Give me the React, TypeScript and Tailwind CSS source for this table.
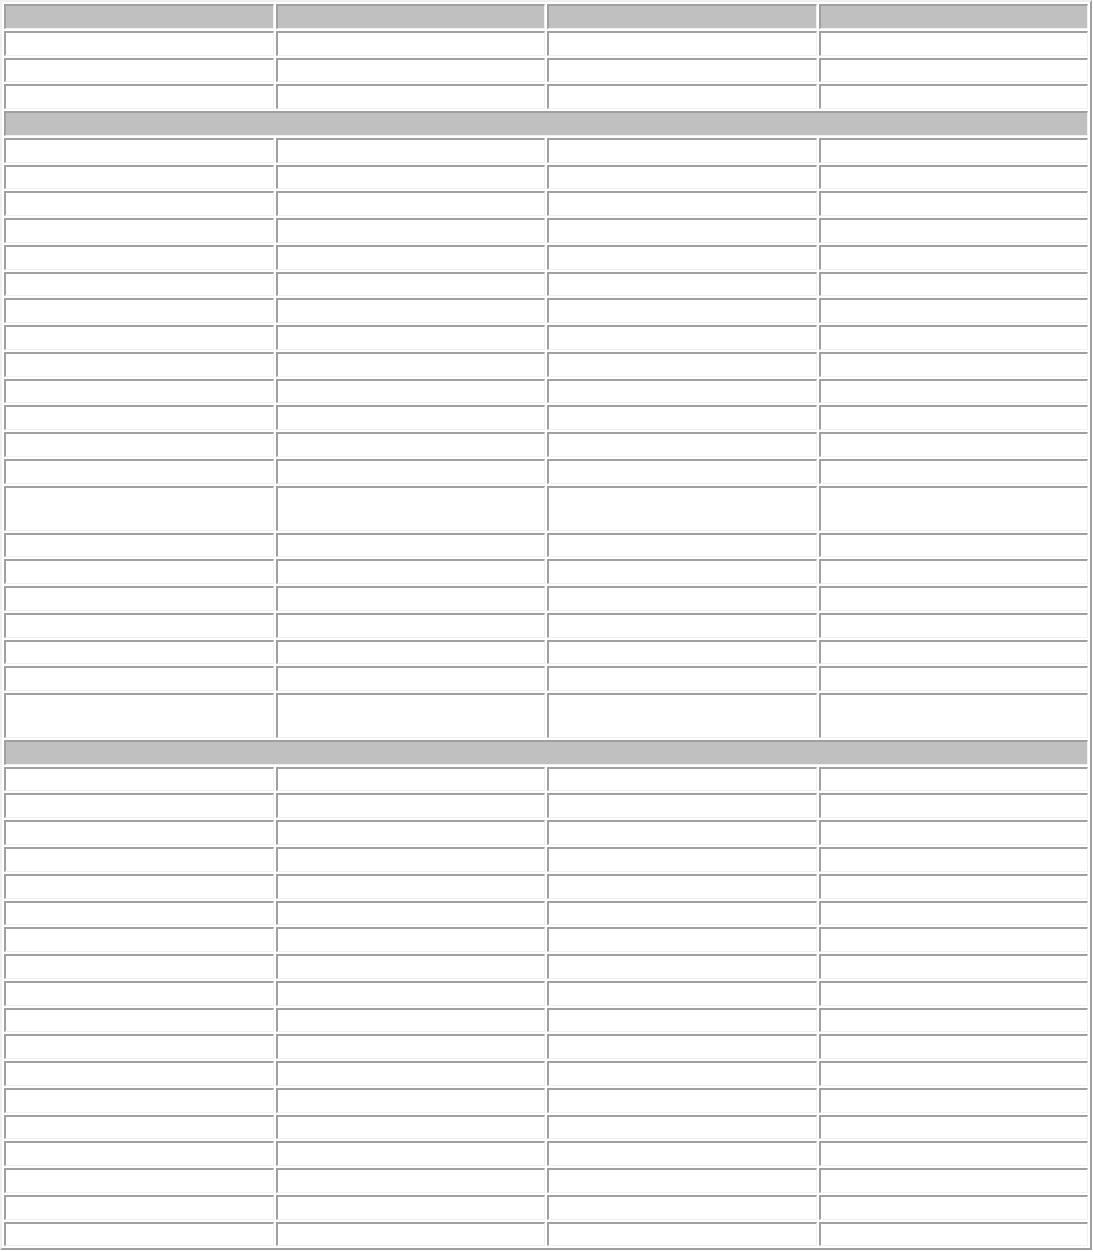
import React from "react";

type Row = { kind: "head" | "section" | "row" | "tall" };

const rows: Row[] = [
  { kind: "head" },
  ...Array.from({ length: 3 }, () => ({ kind: "row" as const })),
  { kind: "section" },
  ...Array.from({ length: 13 }, () => ({ kind: "row" as const })),
  { kind: "tall" },
  ...Array.from({ length: 6 }, () => ({ kind: "row" as const })),
  { kind: "tall" },
  { kind: "section" },
  ...Array.from({ length: 18 }, () => ({ kind: "row" as const })),
];

const cell =
  "p-0 border-t-2 border-l-2 border-b border-r border-t-[#a0a0a0] border-l-[#a0a0a0] border-b-[#f0f0f0] border-r-[#f0f0f0]";

export default function App() {
  return (
    <div className="bg-white w-[1093px] h-[1252px] font-['Liberation_Serif',serif]">
      <table className="w-[1092px] table-fixed border-separate border-spacing-[2px] border-2 border-t-[#f0f0f0] border-l-[#f0f0f0] border-b-[#a0a0a0] border-r-[#a0a0a0]">
        <tbody>
          {rows.map((r, i) => {
            if (r.kind === "section") {
              return (
                <tr key={i} className="h-[24.78px]">
                  <td colSpan={4} className={`${cell} bg-[#c0c0c0]`} />
                </tr>
              );
            }
            const bg = r.kind === "head" ? "bg-[#c0c0c0]" : "bg-white";
            const h = r.kind === "tall" ? "h-[44.78px]" : "h-[24.78px]";
            return (
              <tr key={i} className={h}>
                <td className={`${cell} ${bg}`} />
                <td className={`${cell} ${bg}`} />
                <td className={`${cell} ${bg}`} />
                <td className={`${cell} ${bg}`} />
              </tr>
            );
          })}
        </tbody>
      </table>
    </div>
  );
}
